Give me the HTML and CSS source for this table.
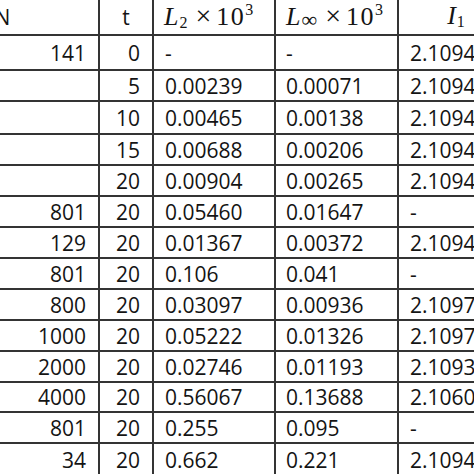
FILE: index.html
```html
<!DOCTYPE html>
<html>
<head>
<meta charset="utf-8">
<link rel="stylesheet" href="styles.css">
</head>
<body>
<div class="table">
  <div class="c hd">N</div>
  <div class="c hd">t</div>
  <div class="c hd math lh"><span class="eq"><i>L</i><span class="sb">2</span><span class="x">×</span><span class="ten">10</span><span class="sp">3</span></span></div>
  <div class="c hd math lh"><span class="eq"><i>L</i><span class="sb inf">∞</span><span class="x">×</span><span class="ten">10</span><span class="sp">3</span></span></div>
  <div class="c hd math"><span class="eq"><i>I</i><span class="sb">1</span></span></div>

  <div class="c r">141</div><div class="c r">0</div><div class="c l">-</div><div class="c l2">-</div><div class="c l3">2.1094</div>
  <div class="c r"></div><div class="c r">5</div><div class="c l">0.00239</div><div class="c l2">0.00071</div><div class="c l3">2.1094</div>
  <div class="c r"></div><div class="c r">10</div><div class="c l">0.00465</div><div class="c l2">0.00138</div><div class="c l3">2.1094</div>
  <div class="c r"></div><div class="c r">15</div><div class="c l">0.00688</div><div class="c l2">0.00206</div><div class="c l3">2.1094</div>
  <div class="c r"></div><div class="c r">20</div><div class="c l">0.00904</div><div class="c l2">0.00265</div><div class="c l3">2.1094</div>
  <div class="c r">801</div><div class="c r">20</div><div class="c l">0.05460</div><div class="c l2">0.01647</div><div class="c l3">-</div>
  <div class="c r">129</div><div class="c r">20</div><div class="c l">0.01367</div><div class="c l2">0.00372</div><div class="c l3">2.1094</div>
  <div class="c r">801</div><div class="c r">20</div><div class="c l">0.106</div><div class="c l2">0.041</div><div class="c l3">-</div>
  <div class="c r">800</div><div class="c r">20</div><div class="c l">0.03097</div><div class="c l2">0.00936</div><div class="c l3">2.1097</div>
  <div class="c r">1000</div><div class="c r">20</div><div class="c l">0.05222</div><div class="c l2">0.01326</div><div class="c l3">2.1097</div>
  <div class="c r">2000</div><div class="c r">20</div><div class="c l">0.02746</div><div class="c l2">0.01193</div><div class="c l3">2.1093</div>
  <div class="c r">4000</div><div class="c r">20</div><div class="c l">0.56067</div><div class="c l2">0.13688</div><div class="c l3">2.1060</div>
  <div class="c r">801</div><div class="c r">20</div><div class="c l">0.255</div><div class="c l2">0.095</div><div class="c l3">-</div>
  <div class="c r">34</div><div class="c r">20</div><div class="c l">0.662</div><div class="c l2">0.221</div><div class="c l3">2.1094</div>
</div>
</body>
</html>
```
FILE: styles.css
```css
html, body {
  margin: 0;
  padding: 0;
  background: #ffffff;
  overflow: hidden;
  width: 474px;
  height: 474px;
}
.table {
  display: grid;
  width: max-content;
  margin-left: -93px;
  grid-template-columns: 191px 52px 120px 121px 114px;
  grid-template-rows: 34px 33px 29px 31px 29px 29px 29px 29px 29px 29px 29px 29px 28px 29px 32px;
  gap: 2px;
  background: #343434;
  font-family: "Open Sans", "Liberation Sans", sans-serif;
  font-size: 21px;
  color: #141414;
}
.c {
  background: #ffffff;
  display: flex;
  align-items: center;
  white-space: nowrap;
  overflow: hidden;
}
.hd {
  justify-content: center;
  line-height: 34px;
  align-items: flex-start;
}
.lh {
  justify-content: flex-start;
  padding-left: 10px;
}
.r {
  justify-content: flex-end;
  padding-right: 12px;
}
.l {
  padding-left: 11px;
}
.l2 {
  padding-left: 10px;
}
.l3 {
  padding-left: 11px;
}
.math {
  font-family: "Liberation Serif", "DejaVu Serif", serif;
  font-size: 26px;
  line-height: 34px;
}
.eq {
  display: inline-block;
  line-height: 34px;
  margin-top: -1px;
}
.math i {
  font-style: italic;
}
.sb {
  font-size: 16px;
  line-height: 0;
  vertical-align: -3px;
  margin-left: 1px;
}
.inf {
  font-size: 22px;
  vertical-align: -2px;
}
.x {
  margin: 0 5px 0 8px;
  font-size: 28px;
}
.ten {
  font-size: 26px;
  letter-spacing: 1.5px;
}
.sp {
  font-size: 16px;
  line-height: 0;
  vertical-align: 10px;
}
```
